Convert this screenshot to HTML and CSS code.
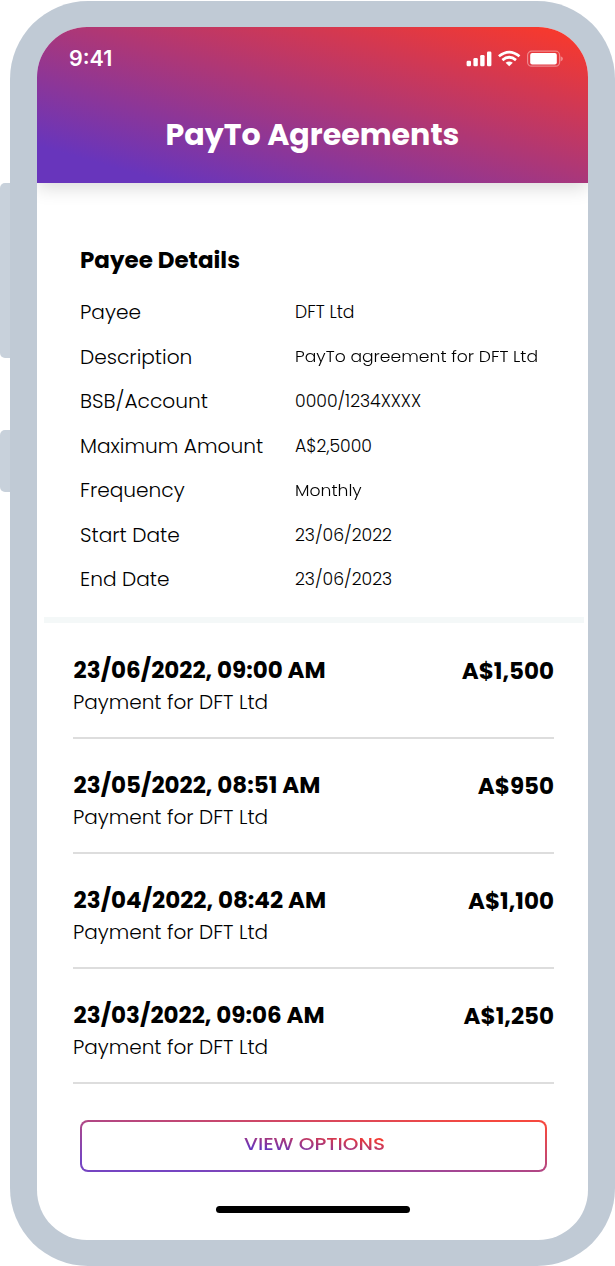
FILE: index.html
```html
<!DOCTYPE html>
<html lang="en">
<head>
    <meta charset="UTF-8">
    <meta name="viewport" content="width=device-width, initial-scale=1.0">
    <title>PayTo Agreements</title>
    <link rel="stylesheet" href="styles.css">
</head>
<body>
    <div class="side-buttons">
        <span class="side-btn volume"></span>
        <span class="side-btn lock"></span>
    </div>
    <div class="phone">
        <div class="screen">
            <header class="header">
                <div class="status-bar">
                    <span class="time">9:41</span>
                    <svg class="status-icons" width="97" height="18" viewBox="0 0 97 18">
                        <g fill="#fff">
                            <rect x="0.6" y="10.8" width="4.4" height="5.4" rx="1.3"/>
                            <rect x="7.4" y="8" width="4.4" height="8.2" rx="1.3"/>
                            <rect x="14.2" y="5" width="4.4" height="11.2" rx="1.3"/>
                            <rect x="21" y="1.4" width="4.4" height="14.8" rx="1.3"/>
                            <path d="M43.2 16.3 L39.6 12.8 Q43.2 10 46.8 12.8 Z"/>
                            <rect x="64.2" y="3" width="26.6" height="11.4" rx="2"/>
                            <path d="M94.6 6.2 Q97 7 97 8.8 Q97 10.6 94.6 11.4 Z" opacity=".4"/>
                        </g>
                        <g fill="none" stroke="#fff" stroke-width="2.7">
                            <path d="M32.9 6.3 Q43.2 -2.1 53.5 6.3"/>
                            <path d="M36.4 10.1 Q43.2 4.4 50 10.1"/>
                        </g>
                        <rect x="61.6" y="1.2" width="32" height="15" rx="4" fill="none" stroke="#fff" stroke-opacity=".4" stroke-width="1.2"/>
                    </svg>
                </div>
                <h1>PayTo Agreements</h1>
            </header>

            <section class="details">
                <h2>Payee Details</h2>
                <dl>
                    <dt>Payee</dt>
                    <dd>DFT Ltd</dd>
                    <dt>Description</dt>
                    <dd class="wide">PayTo agreement for DFT Ltd</dd>
                    <dt>BSB/Account</dt>
                    <dd>0000/1234XXXX</dd>
                    <dt>Maximum Amount</dt>
                    <dd>A$2,5000</dd>
                    <dt>Frequency</dt>
                    <dd class="wide">Monthly</dd>
                    <dt>Start Date</dt>
                    <dd>23/06/2022</dd>
                    <dt>End Date</dt>
                    <dd>23/06/2023</dd>
                </dl>
            </section>

            <ul class="payments">
                <li>
                    <div>
                        <h3>23/06/2022, 09:00 AM</h3>
                        <p>Payment for DFT Ltd</p>
                    </div>
                    <strong>A$1,500</strong>
                </li>
                <li>
                    <div>
                        <h3>23/05/2022, 08:51 AM</h3>
                        <p>Payment for DFT Ltd</p>
                    </div>
                    <strong>A$950</strong>
                </li>
                <li>
                    <div>
                        <h3>23/04/2022, 08:42 AM</h3>
                        <p>Payment for DFT Ltd</p>
                    </div>
                    <strong>A$1,100</strong>
                </li>
                <li>
                    <div>
                        <h3>23/03/2022, 09:06 AM</h3>
                        <p>Payment for DFT Ltd</p>
                    </div>
                    <strong>A$1,250</strong>
                </li>
            </ul>

            <button class="options-btn"><span class="inner"><span class="label">VIEW OPTIONS</span></span></button>
            <div class="home-bar"></div>
        </div>
    </div>
</body>
</html>
```
FILE: styles.css
```css
* {
    box-sizing: border-box;
    margin: 0;
    padding: 0;
}
body {
    display: flex;
    width: 615px;
    height: 1266px;
    overflow: hidden;
    background: #fff;
    color: #000;
    font-family: Poppins, Inter, sans-serif;
    white-space: nowrap;
}
.side-buttons {
    width: 10px;
    padding-top: 183px;
}
.side-btn {
    display: block;
    background: #c8d1db;
    border-radius: 5px 0 0 5px;
}
.volume {
    height: 175px;
    margin-bottom: 72px;
}
.lock {
    height: 62px;
}
.phone {
    width: 605px;
    height: 1265px;
    margin-top: 1px;
    padding: 26px 27px;
    border-radius: 78px;
    background: #c0cad5;
}
.screen {
    height: 1213px;
    border-radius: 50px;
    overflow: hidden;
    background: #fff;
}

/* header */
.header {
    height: 155.5px;
    background: linear-gradient(to top right, #6835bc 12%, #f5392f 95%);
    box-shadow: 0 4px 18px rgba(0, 0, 0, .16);
    color: #fff;
}
.status-bar {
    display: flex;
    justify-content: space-between;
    padding: 21px 25px 0 32px;
    height: 83px;
}
.time {
    font-family: Inter, sans-serif;
    font-size: 21.5px;
    font-weight: 600;
    line-height: 21px;
}
.status-icons {
    margin-top: 2px;
}
h1 {
    font-size: 30.1px;
    font-weight: 700;
    line-height: 50px;
    text-align: center;
}

/* payee details */
.details {
    height: 440.5px;
    margin: 0 4px 0 7px;
    padding: 62.5px 0 0 36px;
    border-bottom: 6px solid #f4f8f8;
}
h2 {
    font-size: 23px;
    line-height: 30px;
    margin-bottom: 15px;
}
dl {
    display: grid;
    grid-template-columns: 215px 1fr;
    grid-auto-rows: 44.5px;
    align-items: center;
    font-weight: 300;
}
dt {
    font-size: 20.15px;
}
dd {
    font-size: 17.25px;
}
.wide {
    font-size: 16px;
    transform: scaleX(1.075);
    transform-origin: left;
}

/* payments */
.payments {
    list-style: none;
    margin: 1px 34px 0 36px;
}
.payments li {
    display: flex;
    justify-content: space-between;
    height: 114.9px;
    padding-top: 31px;
    border-bottom: 2px solid #ddd;
}
.payments h3,
.payments strong {
    font-size: 23px;
    font-weight: 700;
    line-height: 30px;
}
.payments h3 {
    padding-left: 0.6px;
}
.payments strong {
    line-height: 32.4px;
}
.payments p {
    font-size: 20.05px;
    font-weight: 300;
    line-height: 34px;
}

/* bottom */
.options-btn {
    display: block;
    width: 467px;
    height: 52px;
    margin: 36px 0 0 43px;
    padding: 2px;
    border: none;
    border-radius: 8px;
    background: linear-gradient(to top right, #7645c2 12%, #f5483f 93%);
    font-family: inherit;
}
.inner {
    display: block;
    height: 48px;
    border-radius: 6.2px;
    background: #fff;
    line-height: 48px;
}
.label {
    display: inline-block;
    font-size: 18px;
    font-weight: 500;
    line-height: 20px;
    background: linear-gradient(to top right, #6835bc 20%, #f5392f 85%);
    -webkit-background-clip: text;
    background-clip: text;
    color: transparent;
    transform: translateX(1px) scaleX(1.11);
}
.home-bar {
    width: 194px;
    height: 7px;
    margin: 34px 0 0 179px;
    border-radius: 4px;
    background: #000;
}
```
